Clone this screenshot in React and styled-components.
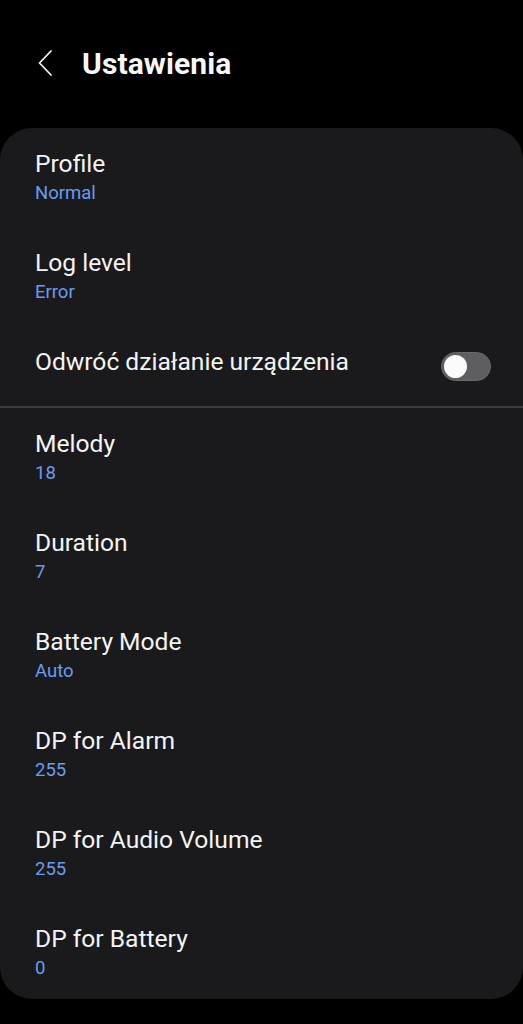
import styled, { createGlobalStyle } from "styled-components";

const GlobalStyle = createGlobalStyle`
  html, body {
    margin: 0;
    padding: 0;
    background: #000;
  }
  body {
    font-family: Roboto, "Noto Sans", "Liberation Sans", sans-serif;
    color: #f5f5f5;
  }
`;

const Screen = styled.div`
  width: 523px;
  min-height: 1024px;
  background: #000;
  display: flex;
  flex-direction: column;
`;

const TopBar = styled.header`
  height: 128px;
  display: flex;
  align-items: center;
  padding: 0 0 0 30px;
  box-sizing: border-box;
`;

const BackButton = styled.button`
  width: 30px;
  height: 30px;
  margin-right: 22px;
  padding: 0;
  border: none;
  background: none;
  display: flex;
  align-items: center;
  justify-content: center;
  margin-top: -2px;
`;

const Title = styled.h1`
  margin: 0;
  font-size: 30px;
  font-weight: 700;
  color: #f7f7f7;
  letter-spacing: 0.1px;
  margin-top: -2px;
`;

const Card = styled.section`
  background: #1a1a1c;
  border-radius: 32px;
  overflow: hidden;
  height: 871px;
`;

const Row = styled.div`
  display: flex;
  align-items: center;
  justify-content: space-between;
  box-sizing: border-box;
  height: ${(p) => p.$height || 99}px;
  padding: 0 32px 0 35px;
`;

const Texts = styled.div`
  display: flex;
  flex-direction: column;
`;

const Label = styled.div`
  font-size: 24.6px;
  line-height: 28px;
  color: #f4f4f4;
  margin-top: ${(p) => p.$shift || 0}px;
`;

const Value = styled.div`
  font-size: 18.5px;
  line-height: 24px;
  margin-top: 3px;
  color: #6b9cf0;
`;

const Divider = styled.div`
  height: 2px;
  background: #3c3c3f;
`;

const Track = styled.div`
  width: 50px;
  height: 29px;
  border-radius: 15px;
  background: #5e5e62;
  box-sizing: border-box;
  border: 1px solid #6a6a6e;
  display: flex;
  align-items: center;
  padding-left: 2px;
`;

const Knob = styled.div`
  width: 23px;
  height: 23px;
  border-radius: 50%;
  background: #fbfbfb;
`;

const topItems = [
  { label: "Profile", value: "Normal" },
  { label: "Log level", value: "Error" },
];

const bottomItems = [
  { label: "Melody", value: "18" },
  { label: "Duration", value: "7" },
  { label: "Battery Mode", value: "Auto" },
  { label: "DP for Alarm", value: "255" },
  { label: "DP for Audio Volume", value: "255" },
  { label: "DP for Battery", value: "0" },
];

function Item({ label, value }) {
  return (
    <Row>
      <Texts>
        <Label>{label}</Label>
        <Value>{value}</Value>
      </Texts>
    </Row>
  );
}

export default function App() {
  return (
    <>
      <GlobalStyle />
      <Screen>
        <TopBar>
          <BackButton aria-label="Wstecz">
            <svg width="16" height="28" viewBox="0 0 16 28" fill="none">
              <path
                d="M14 2 L2.5 14 L14 26"
                stroke="#f2f2f2"
                strokeWidth="1.8"
                strokeLinecap="round"
                strokeLinejoin="round"
              />
            </svg>
          </BackButton>
          <Title>Ustawienia</Title>
        </TopBar>

        <Card>
          {topItems.map((it) => (
            <Item key={it.label} {...it} />
          ))}
          <Row $height={80}>
            <Label $shift={-8}>Odwróć działanie urządzenia</Label>
            <Track>
              <Knob />
            </Track>
          </Row>
          <Divider />
          {bottomItems.map((it) => (
            <Item key={it.label} {...it} />
          ))}
        </Card>
      </Screen>
    </>
  );
}
